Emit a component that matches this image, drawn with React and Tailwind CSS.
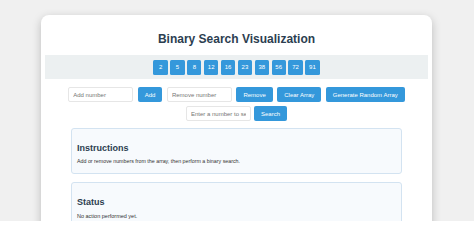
import React from "react";

const nums = [2, 5, 8, 12, 16, 23, 38, 56, 72, 91];

function Btn({ children }) {
  return (
    <button className="h-[15px] bg-[#3498db] text-white text-[6px] leading-none rounded-[2px] px-[7px]">
      {children}
    </button>
  );
}

function Inp({ placeholder }) {
  return (
    <input
      placeholder={placeholder}
      className="h-[15px] w-[65px] border border-[#e6e6e6] rounded-[2px] bg-white px-[4px] text-[6px] leading-none placeholder:text-[#757575] outline-none"
    />
  );
}

export default function App() {
  return (
    <div
      className="w-[474px] h-[221px] overflow-hidden bg-[#f0f0f0] pt-[15px]"
      style={{ fontFamily: '"Liberation Sans", Arial, sans-serif' }}
    >
      <div className="ml-[41px] w-[391px] h-[240px] bg-white rounded-[8px] shadow-[0_3px_10px_rgba(0,0,0,0.22)] pt-[17px] px-[4px]">
        <h1 className="text-center text-[12px] font-bold text-[#2c3e50] leading-[14px]">
          Binary Search Visualization
        </h1>
        <div className="mt-[9px] h-[24px] bg-[#ecf0f1] flex items-center justify-center gap-[2.7px]">
          {nums.map((n) => (
            <div
              key={n}
              className="w-[14.2px] h-[15px] bg-[#3498db] rounded-[1.5px] text-white text-[6px] flex items-center justify-center"
            >
              {n}
            </div>
          ))}
        </div>
        <div className="mt-[8px] flex justify-center items-center gap-[4.5px]">
          <Inp placeholder="Add number" />
          <Btn>Add</Btn>
          <Inp placeholder="Remove number" />
          <Btn>Remove</Btn>
          <Btn>Clear Array</Btn>
          <Btn>Generate Random Array</Btn>
        </div>
        <div className="mt-[4px] flex justify-center items-center gap-[3px]">
          <Inp placeholder="Enter a number to search" />
          <Btn>Search</Btn>
        </div>
        <div className="mx-[26px] mt-[7px] flex flex-col gap-[8px]">
          <div className="h-[46px] border border-[#d3e3f1] bg-[#f7fafd] rounded-[3px] px-[5px] pt-[14px]">
            <h3 className="text-[9px] font-bold text-[#2c3e50] leading-[10px]">Instructions</h3>
            <p className="mt-[5px] text-[5.3px] text-[#333] leading-[7px]">
              Add or remove numbers from the array, then perform a binary search.
            </p>
          </div>
          <div className="h-[60px] border border-[#d3e3f1] bg-[#f7fafd] rounded-[3px] px-[5px] pt-[14px]">
            <h3 className="text-[9px] font-bold text-[#2c3e50] leading-[10px]">Status</h3>
            <p className="mt-[6px] text-[5.5px] text-[#333] leading-[7px]">No action performed yet.</p>
          </div>
        </div>
      </div>
    </div>
  );
}
